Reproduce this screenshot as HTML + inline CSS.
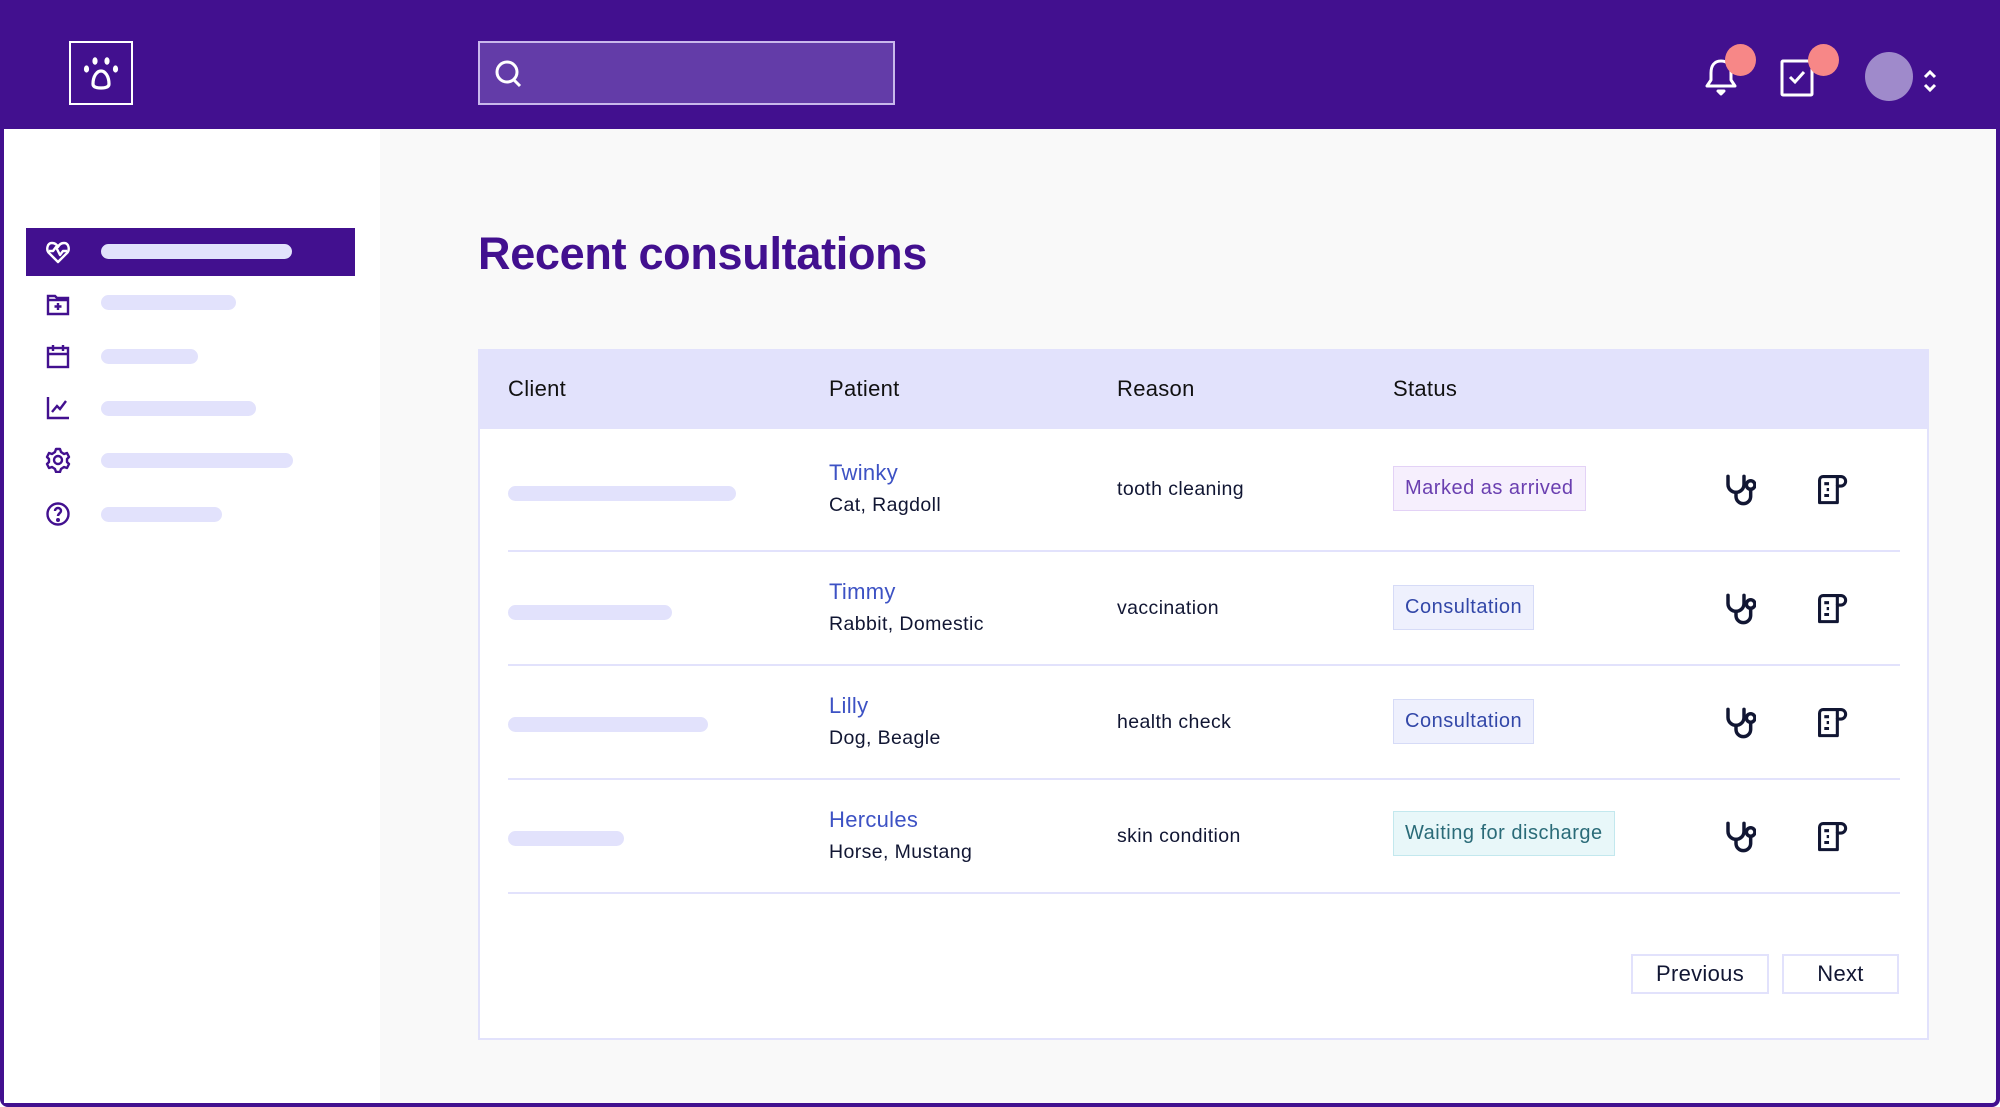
<!DOCTYPE html>
<html><head><meta charset="utf-8"><style>
*{margin:0;padding:0;box-sizing:border-box}
body{width:2000px;height:1107px;overflow:hidden;font-family:"Liberation Sans",sans-serif;background:#fff;position:relative;color:#111633}
.frame{position:absolute;left:0;top:0;width:2000px;height:1107px;border:4px solid #42108f;border-radius:0 0 8px 8px;background:#f9f9f9}
.hdr{position:absolute;left:0;top:0;width:2000px;height:129px;background:#42108f}
.side{position:absolute;left:4px;top:129px;width:376px;height:974px;background:#fff}
.abs{position:absolute}
.bar{position:absolute;height:15px;border-radius:8px;background:#e2e2fc}
.th{position:absolute;top:376px;font-size:22px;color:#111;letter-spacing:0.3px}
.name{position:absolute;font-size:22px;color:#3d52c4;letter-spacing:0.3px}
.sub{position:absolute;font-size:19.5px;color:#111633;letter-spacing:0.4px}
.reason{position:absolute;font-size:19.5px;color:#111633;letter-spacing:0.4px}
.badge{position:absolute;height:45px;line-height:43px;padding:0 11px;font-size:20px;letter-spacing:0.5px;border:1.5px solid}
.arr{background:#f6effd;border-color:#e3d2f6;color:#6a3fb0}
.con{background:#eef0fd;border-color:#d6dbf7;color:#3247a8}
.wai{background:#e8f7f9;border-color:#c3e8ee;color:#2a6b78}
.div{position:absolute;left:508px;width:1392px;height:2px;background:#e2e2fc}
.btn{position:absolute;top:954px;height:40px;border:2px solid #e2e2fc;background:#fff;font-size:22px;line-height:36px;text-align:center;color:#111633;letter-spacing:0.3px}
</style></head><body>
<div class="frame"></div>
<div class="hdr"></div>
<div class="abs" style="left:69px;top:41px;width:64px;height:64px;border:2px solid #fff"></div>
<svg class="abs" style="left:81px;top:53px" width="40" height="40" viewBox="0 0 40 40" fill="none" stroke="#fff" stroke-width="3.2"><ellipse cx="5.5" cy="16" rx="2.6" ry="3.6" fill="#fff" stroke="none"/><ellipse cx="14" cy="8" rx="2.6" ry="3.8" fill="#fff" stroke="none"/><ellipse cx="26" cy="8" rx="2.6" ry="3.8" fill="#fff" stroke="none"/><ellipse cx="34.5" cy="16" rx="2.6" ry="3.6" fill="#fff" stroke="none"/><path d="M12 31c0-8 4-13 8-13s8 5 8 13c0 3-3 4-8 4s-8-1-8-4z"/></svg>
<div class="abs" style="left:478px;top:41px;width:417px;height:64px;background:#633ca8;border:2px solid #c9b8ec"></div>
<svg class="abs" style="left:494px;top:58px" width="30" height="32" viewBox="0 0 30 32" fill="none" stroke="#fff" stroke-width="3"><circle cx="13" cy="14" r="10"/><path d="M20 22l6 6"/></svg>
<svg class="abs" style="left:1702px;top:56px" width="40" height="42" viewBox="0 0 40 42" fill="none" stroke="#fff" stroke-width="3" stroke-linejoin="round"><path d="M19 5c-7 0-10 5-10 12v7l-4 6h28l-4-6v-7c0-7-3-12-10-12z"/><path d="M16 35h6l-3 3z" fill="#fff"/></svg>
<div class="abs" style="left:1725px;top:44px;width:31px;height:32px;border-radius:50%;background:#f78787"></div>
<svg class="abs" style="left:1780px;top:58px" width="40" height="40" viewBox="0 0 40 40" fill="none" stroke="#fff" stroke-width="3"><rect x="2" y="3" width="30" height="34" rx="1"/><path d="M10 19l5 5 9-10"/></svg>
<div class="abs" style="left:1808px;top:44px;width:31px;height:32px;border-radius:50%;background:#f78787"></div>
<div class="abs" style="left:1865px;top:52px;width:48px;height:49px;border-radius:50%;background:#9f8acb"></div>
<svg class="abs" style="left:1921px;top:67px" width="18" height="28" viewBox="0 0 18 28" fill="none" stroke="#fff" stroke-width="3"><path d="M4 10l5-5 5 5M4 18l5 5 5-5"/></svg>

<div class="side"></div>
<div class="abs" style="left:26px;top:228px;width:329px;height:48px;background:#42108f"></div>
<svg class="abs" style="left:45px;top:239px" width="26" height="26" viewBox="0 0 26 26" fill="none" stroke="#fff" stroke-width="2.4" stroke-linejoin="round"><path d="M13 23L4 14C1 11 2 4 7 4c3 0 5 2 6 4 1-2 3-4 6-4 5 0 6 7 3 10z"/><path d="M4 12h4l3-4 4 8 3-4h4"/></svg>
<div class="bar" style="left:101px;top:244px;width:191px;background:#e2e2fc"></div>
<svg class="abs" style="left:45px;top:290px" width="26" height="26" viewBox="0 0 26 26" fill="none" stroke="#42108f" stroke-width="2.4"><path d="M3 6h7l2 2h11v16H3z"/><path d="M3 10h20M13 13v7M9.5 16.5h7"/></svg>
<div class="bar" style="left:101px;top:295px;width:135px"></div>
<svg class="abs" style="left:45px;top:343px" width="26" height="26" viewBox="0 0 26 26" fill="none" stroke="#42108f" stroke-width="2.4"><rect x="3" y="5" width="20" height="19"/><path d="M3 11h20M8 2v6M18 2v6"/></svg>
<div class="bar" style="left:101px;top:349px;width:97px"></div>
<svg class="abs" style="left:45px;top:395px" width="26" height="26" viewBox="0 0 26 26" fill="none" stroke="#42108f" stroke-width="2.4"><path d="M3 2v21h21M7 17l5-6 3 3 6-8"/></svg>
<div class="bar" style="left:101px;top:401px;width:155px"></div>
<svg class="abs" style="left:45px;top:447px" width="26" height="26" viewBox="0 0 26 26" fill="none" stroke="#42108f" stroke-width="2.4" stroke-linejoin="round"><path d="M11 2h4l1 3 3 2 3-1 2 4-2 2v3l2 2-2 4-3-1-3 2-1 3h-4l-1-3-3-2-3 1-2-4 2-2v-3l-2-2 2-4 3 1 3-2z"/><circle cx="13" cy="13" r="4"/></svg>
<div class="bar" style="left:101px;top:453px;width:192px"></div>
<svg class="abs" style="left:45px;top:501px" width="26" height="26" viewBox="0 0 26 26" fill="none" stroke="#42108f" stroke-width="2.4"><circle cx="13" cy="13" r="10.5"/><path d="M10 10c0-2 1.5-3 3-3s3 1 3 3-3 2.5-3 5"/><circle cx="13" cy="19" r="0.8" fill="#42108f"/></svg>
<div class="bar" style="left:101px;top:507px;width:121px"></div>

<div class="abs" style="left:478px;top:228px;font-size:45px;font-weight:bold;color:#42108f;letter-spacing:-0.3px">Recent consultations</div>

<div class="abs" style="left:478px;top:349px;width:1451px;height:691px;background:#fff;border:2px solid #e2e2fc"></div>
<div class="abs" style="left:478px;top:349px;width:1451px;height:80px;background:#e2e2fc"></div>
<div class="th" style="left:508px">Client</div>
<div class="th" style="left:829px">Patient</div>
<div class="th" style="left:1117px">Reason</div>
<div class="th" style="left:1393px">Status</div>

<div class="bar" style="left:508px;top:486px;width:228px"></div>
<div class="name" style="left:829px;top:460px">Twinky</div>
<div class="sub" style="left:829px;top:494px">Cat, Ragdoll</div>
<div class="reason" style="left:1117px;top:478px">tooth cleaning</div>
<div class="badge arr" style="left:1393px;top:466px">Marked as arrived</div>
<div class="div" style="top:550px"></div>

<div class="bar" style="left:508px;top:605px;width:164px"></div>
<div class="name" style="left:829px;top:579px">Timmy</div>
<div class="sub" style="left:829px;top:613px">Rabbit, Domestic</div>
<div class="reason" style="left:1117px;top:597px">vaccination</div>
<div class="badge con" style="left:1393px;top:585px">Consultation</div>
<div class="div" style="top:664px"></div>

<div class="bar" style="left:508px;top:717px;width:200px"></div>
<div class="name" style="left:829px;top:693px">Lilly</div>
<div class="sub" style="left:829px;top:727px">Dog, Beagle</div>
<div class="reason" style="left:1117px;top:711px">health check</div>
<div class="badge con" style="left:1393px;top:699px">Consultation</div>
<div class="div" style="top:778px"></div>

<div class="bar" style="left:508px;top:831px;width:116px"></div>
<div class="name" style="left:829px;top:807px">Hercules</div>
<div class="sub" style="left:829px;top:841px">Horse, Mustang</div>
<div class="reason" style="left:1117px;top:825px">skin condition</div>
<div class="badge wai" style="left:1393px;top:811px">Waiting for discharge</div>
<div class="div" style="top:892px"></div>

<svg width="0" height="0" style="position:absolute"><defs>
<g id="st" fill="none" stroke="#111633" stroke-width="2.6" stroke-linecap="round"><path d="M3 3v6a6 6 0 0 0 12 0V3"/><path d="M9 15v3a5.5 5.5 0 0 0 11 0v-5"/><circle cx="20" cy="9.5" r="3.2"/></g>
<g id="dc" fill="none" stroke="#111633" stroke-width="2.6" stroke-linejoin="round"><path d="M3 6a3 3 0 0 1 3-3h15a4 4 0 0 1 0 8h-3v14H3z"/><path d="M18 3v8M7 9h4M9 14h2M7 19h4"/></g>
</defs></svg>
<svg class="abs" style="left:1724px;top:472px" width="32" height="34" viewBox="0 0 24 25"><use href="#st"/></svg>
<svg class="abs" style="left:1816px;top:473px" width="32" height="32" viewBox="0 0 27 27"><use href="#dc"/></svg>
<svg class="abs" style="left:1724px;top:591px" width="32" height="34" viewBox="0 0 24 25"><use href="#st"/></svg>
<svg class="abs" style="left:1816px;top:592px" width="32" height="32" viewBox="0 0 27 27"><use href="#dc"/></svg>
<svg class="abs" style="left:1724px;top:705px" width="32" height="34" viewBox="0 0 24 25"><use href="#st"/></svg>
<svg class="abs" style="left:1816px;top:706px" width="32" height="32" viewBox="0 0 27 27"><use href="#dc"/></svg>
<svg class="abs" style="left:1724px;top:819px" width="32" height="34" viewBox="0 0 24 25"><use href="#st"/></svg>
<svg class="abs" style="left:1816px;top:820px" width="32" height="32" viewBox="0 0 27 27"><use href="#dc"/></svg>

<div class="btn" style="left:1631px;width:138px">Previous</div>
<div class="btn" style="left:1782px;width:117px">Next</div>
</body></html>
